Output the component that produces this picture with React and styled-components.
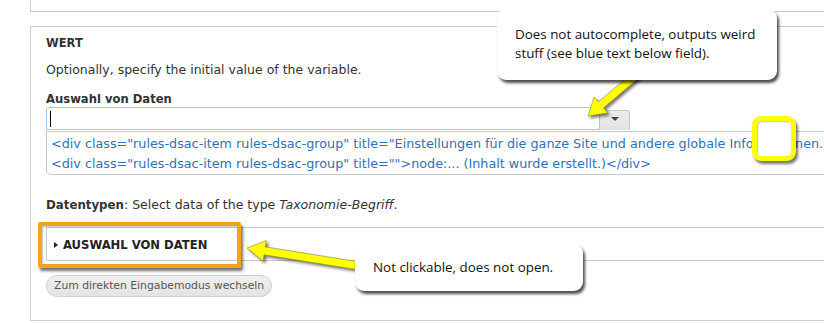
import React from 'react';
import styled, { createGlobalStyle } from 'styled-components';

const GlobalStyle = createGlobalStyle`
  html, body {
    margin: 0;
    padding: 0;
    background: #fff;
    overflow: hidden;
  }
  body {
    font-family: "DejaVu Sans", Verdana, sans-serif;
    color: #333;
  }
`;

function arrowPoints([x1, y1], [x2, y2], shaft, head, headLen) {
  const dx = x2 - x1;
  const dy = y2 - y1;
  const len = Math.hypot(dx, dy);
  const ux = dx / len;
  const uy = dy / len;
  const nx = -uy;
  const ny = ux;
  const bx = x2 - ux * headLen;
  const by = y2 - uy * headLen;
  const p = (x, y) => `${x.toFixed(1)},${y.toFixed(1)}`;
  return [
    p(x1 + nx * shaft / 2, y1 + ny * shaft / 2),
    p(bx + nx * shaft / 2, by + ny * shaft / 2),
    p(bx + nx * head / 2, by + ny * head / 2),
    p(x2, y2),
    p(bx - nx * head / 2, by - ny * head / 2),
    p(bx - nx * shaft / 2, by - ny * shaft / 2),
    p(x1 - nx * shaft / 2, y1 - ny * shaft / 2),
  ].join(' ');
}

const arrows = [
  { from: [642, 70], to: [588, 116], shaft: 8, head: 21, headLen: 17 },
  { from: [372, 268], to: [247, 248], shaft: 8, head: 21, headLen: 18 },
];

function App() {
  return (
    <Page>
      <GlobalStyle />
      <TopPanel />
      <Fieldset>
        <Legend>WERT</Legend>
        <Description $gap={12}>Optionally, specify the initial value of the variable.</Description>
        <Label>Auswahl von Daten</Label>
        <InputRow>
          <TextInput>
            <Caret />
          </TextInput>
          <DropButton>
            <Triangle />
          </DropButton>
        </InputRow>
        <Suggestions>
          <div>&lt;div class="rules-dsac-item rules-dsac-group" title="Einstellungen für die ganze Site und andere globale Informationen."&gt;</div>
          <div>&lt;div class="rules-dsac-item rules-dsac-group" title=""&gt;node:... (Inhalt wurde erstellt.)&lt;/div&gt;</div>
        </Suggestions>
        <Description $gap={22}>
          <strong>Datentypen</strong>: Select data of the type <em>Taxonomie-Begriff</em>.
        </Description>
        <Collapsed>
          <CollapsedTitle>
            <SmallArrow />
            AUSWAHL VON DATEN
          </CollapsedTitle>
        </Collapsed>
        <PillButton>Zum direkten Eingabemodus wechseln</PillButton>
      </Fieldset>

      <ArrowLayer width="824" height="323">
        {arrows.map((a, i) => (
          <polygon
            key={i}
            points={arrowPoints(a.from, a.to, a.shaft, a.head, a.headLen)}
            fill="#ffff00"
            stroke="#8a8a30"
            strokeWidth="0.6"
            strokeLinejoin="round"
          />
        ))}
      </ArrowLayer>

      <Highlight $left={38} $top={222} $width={203} $height={46} $color="#f7a21b" $thick={4} $radius={2} />
      <Highlight $left={752} $top={116} $width={44} $height={45} $color="#ffff00" $thick={5} $radius={9} $fill="#fff" />

      <Callout $left={497} $top={9} $width={280} $height={71}>
        Does not autocomplete, outputs weird<br />
        stuff (see blue text below field).
      </Callout>
      <Callout $left={355} $top={244} $width={228} $height={47} $center>
        Not clickable, does not open.
      </Callout>
    </Page>
  );
}

export default App;

const Page = styled.div`
  position: relative;
  width: 824px;
  height: 323px;
  overflow: hidden;
  padding-left: 30px;
  box-sizing: border-box;
`;

const TopPanel = styled.div`
  width: 1000px;
  height: 12px;
  border: 1px solid #ccc;
  border-top: none;
  box-sizing: border-box;
`;

const Fieldset = styled.div`
  width: 1000px;
  height: 295px;
  margin-top: 14px;
  border: 1px solid #ccc;
  box-sizing: border-box;
  padding: 9px 0 0 15px;
  display: flex;
  flex-direction: column;
  align-items: flex-start;
`;

const Legend = styled.div`
  font-size: 11.5px;
  font-weight: bold;
  line-height: 14px;
  text-transform: uppercase;
`;

const Description = styled.div`
  font-size: 12.5px;
  line-height: 16px;
  margin-top: ${p => p.$gap}px;

  strong {
    font-weight: bold;
    font-size: 11.8px;
  }

  em {
    font-style: italic;
  }
`;

const Label = styled.div`
  font-size: 11.6px;
  font-weight: bold;
  line-height: 16px;
  margin-top: 13px;
`;

const InputRow = styled.div`
  display: flex;
  align-items: flex-end;
  margin-top: 0;
`;

const TextInput = styled.div`
  width: 554px;
  height: 23px;
  border: 1px solid #a9c8e8;
  border-radius: 3px 0 0 0;
  box-sizing: border-box;
  display: flex;
  align-items: center;
  padding-left: 3px;
  background: #fff;
`;

const Caret = styled.span`
  width: 1px;
  height: 16px;
  background: #000;
`;

const DropButton = styled.div`
  width: 30px;
  height: 20px;
  box-sizing: border-box;
  border: 1px solid #c8c8c8;
  border-left: none;
  border-bottom: none;
  border-radius: 0 3px 0 0;
  background: linear-gradient(#ececec, #e2e2e2);
  display: flex;
  justify-content: center;
  padding-top: 6px;
`;

const Triangle = styled.span`
  width: 0;
  height: 0;
  border-left: 4px solid transparent;
  border-right: 4px solid transparent;
  border-top: 4px solid #444;
`;

const Suggestions = styled.div`
  width: 900px;
  margin-top: 1px;
  padding: 2px 0 0 4px;
  box-sizing: border-box;
  border: 1px solid #bccbdc;
  border-bottom-color: #ccc;
  border-radius: 0 0 0 5px;
  color: #2f72b8;
  font-size: 12.75px;
  line-height: 20px;
  white-space: nowrap;
`;

const Collapsed = styled.div`
  width: 950px;
  height: 34px;
  margin-top: 14px;
  border: 1px solid #ccc;
  border-right: none;
  box-sizing: border-box;
  display: flex;
  align-items: center;
  padding-left: 7px;
`;

const CollapsedTitle = styled.div`
  display: flex;
  align-items: center;
  gap: 5px;
  font-size: 11.6px;
  font-weight: bold;
  color: #222;
  margin-top: 1px;
`;

const SmallArrow = styled.span`
  width: 0;
  height: 0;
  border-top: 3.5px solid transparent;
  border-bottom: 3.5px solid transparent;
  border-left: 4px solid #222;
`;

const PillButton = styled.div`
  margin-top: 14px;
  height: 22px;
  padding: 0 7px;
  border: 1px solid #cfcfcf;
  border-radius: 11px;
  background: linear-gradient(#f0f0f0, #e3e3e3);
  color: #555;
  font-size: 10.8px;
  line-height: 20px;
  box-sizing: border-box;
  display: flex;
  align-items: center;
`;

const ArrowLayer = styled.svg`
  position: absolute;
  left: 0;
  top: 0;
  pointer-events: none;
  filter: drop-shadow(2px 2px 1.5px rgba(0, 0, 0, 0.55));
`;

const Highlight = styled.div`
  position: absolute;
  left: ${p => p.$left}px;
  top: ${p => p.$top}px;
  width: ${p => p.$width}px;
  height: ${p => p.$height}px;
  box-sizing: border-box;
  border: ${p => p.$thick}px solid ${p => p.$color};
  border-radius: ${p => p.$radius}px;
  background: ${p => p.$fill || 'transparent'};
  box-shadow: 2px 3px 3px rgba(0, 0, 0, 0.55), inset 1px 1px 2px rgba(0, 0, 0, 0.25);
`;

const Callout = styled.div`
  position: absolute;
  left: ${p => p.$left}px;
  top: ${p => p.$top}px;
  width: ${p => p.$width}px;
  height: ${p => p.$height}px;
  box-sizing: border-box;
  padding: ${p => (p.$center ? '0 0 0 18px' : '16px 0 0 18px')};
  display: ${p => (p.$center ? 'flex' : 'block')};
  align-items: center;
  background: #fff;
  border-radius: 9px;
  box-shadow: 2px 3px 3px rgba(0, 0, 0, 0.7);
  font-family: "Open Sans", "Noto Sans", sans-serif;
  font-size: 13.4px;
  line-height: 19px;
  color: #111;
`;
